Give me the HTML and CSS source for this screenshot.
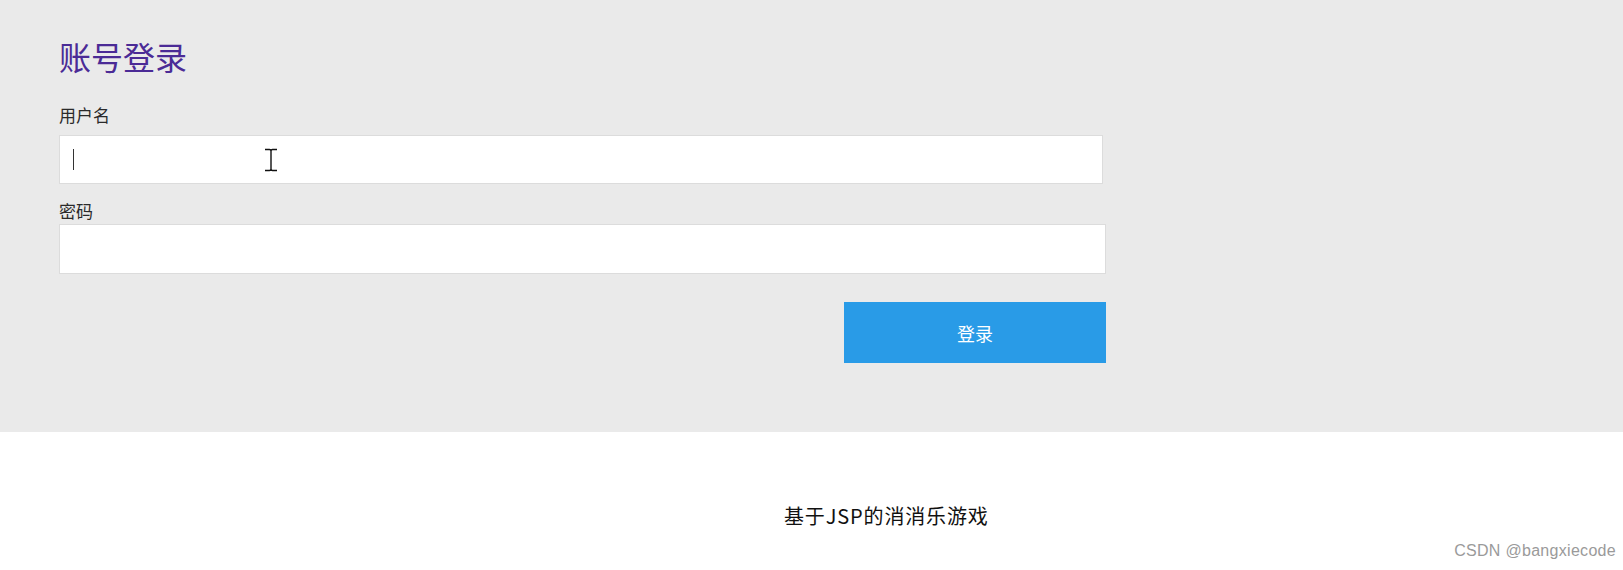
FILE: index.html
```html
<!DOCTYPE html>
<html lang="zh-CN">
<head>
<meta charset="utf-8">
<title>账号登录</title>
<link rel="stylesheet" href="styles.css">
</head>
<body>
<section class="login">
  <h1 class="login-title">账号登录</h1>
  <form class="login-form">
    <label class="field-label label-user" for="user">用户名</label>
    <div class="input-wrap">
      <input class="field field-user" id="user" type="text">
      <span class="caret"></span>
      <svg class="ibeam" width="14" height="24" viewBox="0 0 14 24">
        <path d="M1 1.5 H5.5 Q7 1.5 7 3 Q7 1.5 8.5 1.5 H13 M7 3 V21 M1 22.5 H5.5 Q7 22.5 7 21 Q7 22.5 8.5 22.5 H13" fill="none" stroke="#fff" stroke-width="3"/>
        <path d="M1 1.5 H5.5 Q7 1.5 7 3 Q7 1.5 8.5 1.5 H13 M7 3 V21 M1 22.5 H5.5 Q7 22.5 7 21 Q7 22.5 8.5 22.5 H13" fill="none" stroke="#111" stroke-width="1.4"/>
      </svg>
    </div>
    <label class="field-label label-pass" for="pass">密码</label>
    <input class="field field-pass" id="pass" type="password">
    <div class="actions">
      <button class="btn-login" type="button">登录</button>
    </div>
  </form>
</section>
<footer class="footer">
  <p class="footer-text">基于JSP的消消乐游戏</p>
</footer>
<div class="watermark">CSDN @bangxiecode</div>
</body>
</html>
```

FILE: styles.css
```css
html, body {
  margin: 0;
  padding: 0;
  background: #ffffff;
}

body {
  font-family: "Noto Sans CJK SC", "Noto Sans", sans-serif;
  color: #222;
  position: relative;
  min-height: 570px;
  overflow: hidden;
}

.login {
  background: #eaeaea;
  padding: 40px 0 69px 59px;
  height: 432px;
  box-sizing: border-box;
}

.login-title {
  margin: 0;
  font-size: 32px;
  line-height: 32px;
  font-weight: 400;
  color: #4b2b96;
  letter-spacing: 0;
}

.login-form {
  display: flex;
  flex-direction: column;
  width: 1047px;
}

.field-label {
  display: block;
  font-size: 17px;
  line-height: 17px;
  color: #2a2a2a;
}

.label-user {
  margin-top: 34px;
}

.label-pass {
  margin-top: 18px;
}

.input-wrap {
  position: relative;
  margin-top: 12px;
  width: 1044px;
  height: 49px;
}

.field {
  display: block;
  box-sizing: border-box;
  margin: 0;
  background: #ffffff;
  border: 1px solid #dcdcdc;
  border-radius: 0;
  outline: none;
  font-family: inherit;
  font-size: 16px;
}

.field-user {
  width: 1044px;
  height: 49px;
}

.field-pass {
  margin-top: 5px;
  width: 1047px;
  height: 50px;
}

.caret {
  position: absolute;
  left: 14px;
  top: 14px;
  width: 1px;
  height: 21px;
  background: #333;
}

.ibeam {
  position: absolute;
  left: 205px;
  top: 13px;
}

.actions {
  display: flex;
  justify-content: flex-end;
  margin-top: 28px;
}

.btn-login {
  width: 262px;
  height: 61px;
  border: none;
  background: #299be7;
  color: #ffffff;
  font-family: inherit;
  font-size: 18px;
  padding: 0;
  cursor: pointer;
}

.footer {
  background: #ffffff;
  padding: 74px 0 0 784px;
}

.footer-text {
  margin: 0;
  font-size: 20px;
  line-height: 20px;
  letter-spacing: 0.85px;
  color: #111;
}

.watermark {
  position: absolute;
  right: 7px;
  top: 543px;
  font-family: "Liberation Sans", Arial, sans-serif;
  font-size: 16px;
  line-height: 16px;
  letter-spacing: 0.3px;
  color: #9a9a9a;
}
```
